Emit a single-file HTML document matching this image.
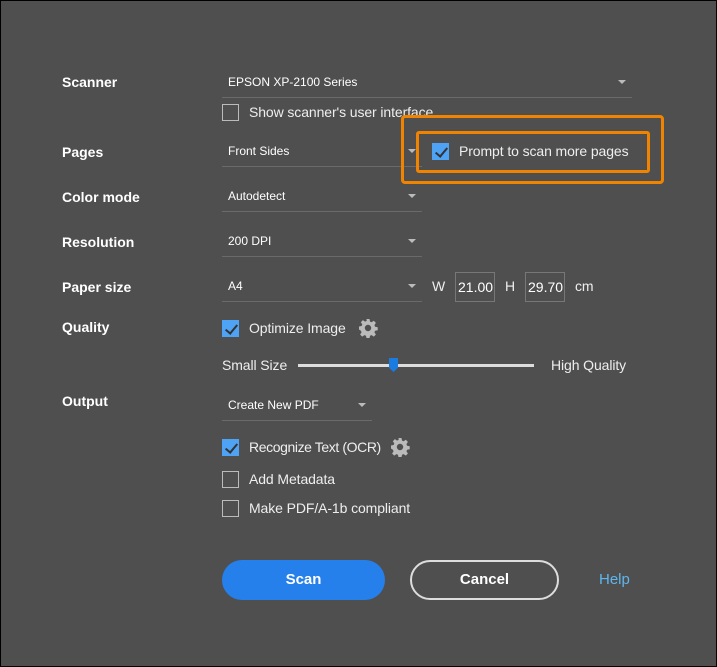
<!DOCTYPE html>
<html><head><style>
*{margin:0;padding:0;box-sizing:border-box}
body{width:717px;height:667px;background:#4f4f4f;position:relative;overflow:hidden;font-family:"Segoe UI","Liberation Sans",sans-serif;color:#fff}
.frame{position:absolute;left:0;top:0;width:717px;height:667px;border:1px solid #000}
.a{position:absolute;white-space:nowrap}
.lbl{font-size:14px;font-weight:bold;left:62px}
.dd{position:absolute;border-bottom:1px solid #6a6a6a;height:26px;font-size:12px;padding-left:6px;line-height:20px}
.dd:after{content:"";position:absolute;right:6px;top:8px;border-left:4px solid transparent;border-right:4px solid transparent;border-top:4px solid #bbb}
.cb{position:absolute;width:17px;height:17px;border:1px solid #bbb}
.cb.on{background:#4ea3f5;border-color:#4ea3f5}
.cb.on:after{content:"";position:absolute;left:5px;top:1px;width:5px;height:10px;border-right:2.5px solid #333;border-bottom:2.5px solid #333;transform:rotate(40deg)}
.t{font-size:14px;color:#eee;letter-spacing:-0.1px}
.box{position:absolute;border:1px solid #777;height:30px;top:272px;font-size:14px;line-height:28px;padding-left:2px}
svg.g{position:absolute;width:20px;height:20px}
</style></head><body>
<div class="frame"></div>
<div class="a lbl" style="top:74px">Scanner</div>
<div class="a lbl" style="top:144px">Pages</div>
<div class="a lbl" style="top:189px">Color mode</div>
<div class="a lbl" style="top:234px">Resolution</div>
<div class="a lbl" style="top:279px">Paper size</div>
<div class="a lbl" style="top:319px">Quality</div>
<div class="a lbl" style="top:393px">Output</div>

<div class="dd" style="left:222px;top:72px;width:410px">EPSON XP-2100 Series</div>
<div class="cb" style="left:222px;top:104px"></div>
<div class="a t" style="left:249px;top:104px">Show scanner's user interface</div>
<div class="dd" style="left:222px;top:141px;width:200px">Front Sides</div>
<div class="a" style="left:401px;top:115px;width:263px;height:69px;border:3px solid #f08400;border-radius:4px"></div>
<div class="a" style="left:416px;top:131px;width:234px;height:42px;border:3px solid #f08400;border-radius:3px"></div>
<div class="cb on" style="left:432px;top:143px"></div>
<div class="a t" style="left:459px;top:143px">Prompt to scan more pages</div>
<div class="dd" style="left:222px;top:186px;width:200px">Autodetect</div>
<div class="dd" style="left:222px;top:231px;width:200px">200 DPI</div>
<div class="dd" style="left:222px;top:276px;width:200px">A4</div>
<div class="a t" style="left:432px;top:278px">W</div>
<div class="box" style="left:455px;width:40px">21.00</div>
<div class="a t" style="left:505px;top:278px">H</div>
<div class="box" style="left:525px;width:40px">29.70</div>
<div class="a t" style="left:575px;top:278px">cm</div>
<div class="cb on" style="left:222px;top:320px"></div>
<div class="a t" style="left:249px;top:320px">Optimize Image</div>
<svg class="g" style="left:358px;top:318px" viewBox="0 0 20 20"><path fill="#bbb" d="M8.5 1h3l.5 2.6 1.6.7 2.2-1.5 2.1 2.1-1.5 2.2.7 1.6 2.6.5v3l-2.6.5-.7 1.6 1.5 2.2-2.1 2.1-2.2-1.5-1.6.7-.5 2.6h-3l-.5-2.6-1.6-.7-2.2 1.5-2.1-2.1 1.5-2.2-.7-1.6L1 11.5v-3l2.6-.5.7-1.6-1.5-2.2 2.1-2.1 2.2 1.5 1.6-.7zM10 6.8a3.2 3.2 0 1 0 0 6.4 3.2 3.2 0 1 0 0-6.4z"/></svg>
<div class="a t" style="left:222px;top:357px">Small Size</div>
<div class="a" style="left:298px;top:364px;width:236px;height:3px;background:#ddd"></div>
<div class="a" style="left:389px;top:358px;width:9px;height:14px;background:#1a7be0;clip-path:polygon(0 0,100% 0,100% 70%,50% 100%,0 70%)"></div>
<div class="a t" style="left:551px;top:357px">High Quality</div>
<div class="dd" style="left:222px;top:395px;width:150px">Create New PDF</div>
<div class="cb on" style="left:222px;top:439px"></div>
<div class="a t" style="left:249px;top:439px;letter-spacing:-0.4px">Recognize Text (OCR)</div>
<svg class="g" style="left:390px;top:437px" viewBox="0 0 20 20"><path fill="#bbb" d="M8.5 1h3l.5 2.6 1.6.7 2.2-1.5 2.1 2.1-1.5 2.2.7 1.6 2.6.5v3l-2.6.5-.7 1.6 1.5 2.2-2.1 2.1-2.2-1.5-1.6.7-.5 2.6h-3l-.5-2.6-1.6-.7-2.2 1.5-2.1-2.1 1.5-2.2-.7-1.6L1 11.5v-3l2.6-.5.7-1.6-1.5-2.2 2.1-2.1 2.2 1.5 1.6-.7zM10 6.8a3.2 3.2 0 1 0 0 6.4 3.2 3.2 0 1 0 0-6.4z"/></svg>
<div class="cb" style="left:222px;top:471px"></div>
<div class="a t" style="left:249px;top:471px">Add Metadata</div>
<div class="cb" style="left:222px;top:500px"></div>
<div class="a t" style="left:249px;top:500px">Make PDF/A-1b compliant</div>
<div class="a" style="left:222px;top:560px;width:163px;height:40px;border-radius:20px;background:#2680eb;text-align:center;line-height:40px;font-size:15px;font-weight:bold">Scan</div>
<div class="a" style="left:410px;top:560px;width:149px;height:40px;border-radius:20px;border:2px solid #ddd;text-align:center;line-height:36px;font-size:15px;font-weight:bold">Cancel</div>
<div class="a" style="left:599px;top:571px;font-size:15px;color:#5fb6ee">Help</div>
</body></html>
